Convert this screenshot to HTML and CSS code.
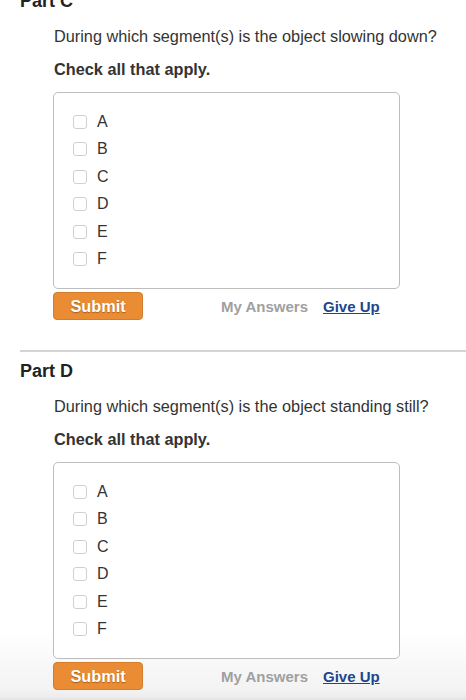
FILE: index.html
```html
<!DOCTYPE html>
<html>
<head>
<meta charset="utf-8">
<link rel="stylesheet" href="styles.css">
</head>
<body>
<div class="page">
  <section class="part part-first">
    <h2 class="part-title">Part C</h2>
    <div class="part-body">
      <p class="question">During which segment(s) is the object slowing down?</p>
      <p class="instruction">Check all that apply.</p>
      <div class="answer-box">
        <label class="option"><span class="check"></span><span class="opt-label">A</span></label>
        <label class="option"><span class="check"></span><span class="opt-label">B</span></label>
        <label class="option"><span class="check"></span><span class="opt-label">C</span></label>
        <label class="option"><span class="check"></span><span class="opt-label">D</span></label>
        <label class="option"><span class="check"></span><span class="opt-label">E</span></label>
        <label class="option"><span class="check"></span><span class="opt-label">F</span></label>
      </div>
      <div class="actions">
        <button class="submit">Submit</button>
        <span class="my-answers">My Answers</span>
        <a class="give-up" href="#">Give Up</a>
      </div>
    </div>
  </section>
  <section class="part">
    <h2 class="part-title">Part D</h2>
    <div class="part-body">
      <p class="question">During which segment(s) is the object standing still?</p>
      <p class="instruction">Check all that apply.</p>
      <div class="answer-box">
        <label class="option"><span class="check"></span><span class="opt-label">A</span></label>
        <label class="option"><span class="check"></span><span class="opt-label">B</span></label>
        <label class="option"><span class="check"></span><span class="opt-label">C</span></label>
        <label class="option"><span class="check"></span><span class="opt-label">D</span></label>
        <label class="option"><span class="check"></span><span class="opt-label">E</span></label>
        <label class="option"><span class="check"></span><span class="opt-label">F</span></label>
      </div>
      <div class="actions">
        <button class="submit">Submit</button>
        <span class="my-answers">My Answers</span>
        <a class="give-up" href="#">Give Up</a>
      </div>
    </div>
  </section>
</div>
</body>
</html>
```
FILE: styles.css
```css
html {
  height: 100%;
  background: #fff linear-gradient(to bottom, #ffffff 0%, #f3f3f3 85%, #ececec 96%, #e2e2e2 100%) no-repeat left bottom / 100% 70px;
}
body {
  margin: 0;
  padding: 0;
  font-family: "Liberation Sans", Arial, sans-serif;
  color: #333;
  overflow: hidden;
}
.page {
  margin-left: 20px;
}
.part {
  border-top: 2px solid #d4d4d4;
  padding-top: 9px;
  padding-bottom: 30px;
}
.part-first {
  border-top: none;
  padding-top: 0;
  margin-top: -9px;
}
.part-title {
  margin: 0;
  font-size: 18px;
  line-height: 20px;
  font-weight: bold;
  color: #222;
}
.part-body {
  margin-left: 34px;
  display: flex;
  flex-direction: column;
}
.question {
  margin: 15px 0 0 0;
  font-size: 16.3px;
  line-height: 20px;
  color: #333;
}
.instruction {
  margin: 13px 0 0 0;
  font-size: 16.3px;
  line-height: 20px;
  font-weight: bold;
  color: #333;
}
.answer-box {
  margin: 13px 0 0 -1px;
  width: 347px;
  height: 197px;
  border: 1px solid #bdbdbd;
  border-radius: 5px;
  padding: 19px 0 0 19px;
  box-sizing: border-box;
  background: #fff;
  display: flex;
  flex-direction: column;
  gap: 7.4px;
}
.option {
  display: flex;
  align-items: center;
  height: 20px;
  font-size: 16px;
  color: #333;
}
.check {
  width: 14px;
  height: 14px;
  border: 1px solid #d0d0d0;
  border-radius: 3px;
  box-sizing: border-box;
  background: #fff;
  margin-right: 10px;
}
.actions {
  margin: 3px 0 0 -1px;
  display: flex;
  align-items: center;
  height: 28px;
}
.submit {
  width: 90px;
  height: 28px;
  border: 1px solid #d27c2c;
  border-radius: 4px;
  background: #ea8c33;
  color: #fff;
  font-family: "Liberation Sans", Arial, sans-serif;
  font-size: 16.3px;
  font-weight: bold;
  text-shadow: 0 1px 1px rgba(120, 60, 0, 0.55);
  padding: 0;
}
.my-answers {
  margin-left: 78px;
  font-size: 15px;
  font-weight: bold;
  color: #a0a0a0;
}
.give-up {
  margin-left: 15px;
  font-size: 15px;
  font-weight: bold;
  color: #1d4591;
  text-decoration: underline;
}
```
